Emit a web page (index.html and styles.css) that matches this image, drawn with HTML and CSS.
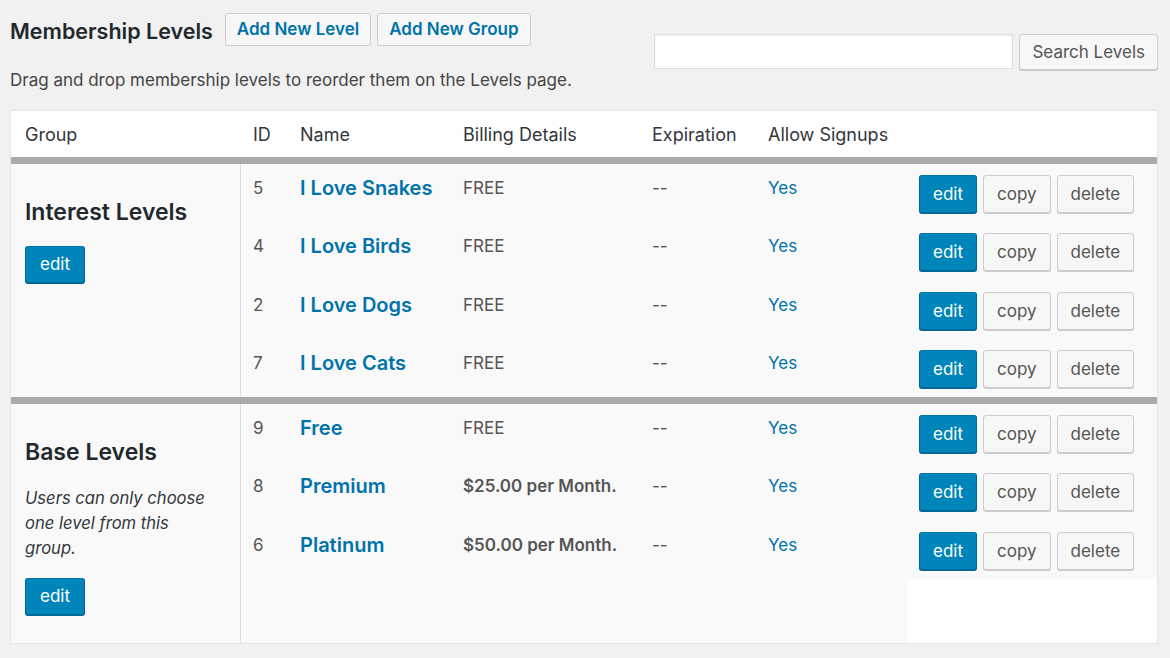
FILE: index.html
```html
<!DOCTYPE html>
<html lang="en">
<head>
    <meta charset="UTF-8">
    <meta name="viewport" content="width=device-width, initial-scale=1.0">
    <title>Membership Levels</title>
    <link rel="stylesheet" href="styles.css">
</head>
<body>
    <div class="wrap">
        <div class="top">
            <div class="top-left">
                <div class="title-row">
                    <h1>Membership Levels</h1>
                    <a href="#" class="page-btn">Add New Level</a>
                    <a href="#" class="page-btn">Add New Group</a>
                </div>
                <p class="intro">Drag and drop membership levels to reorder them on the Levels page.</p>
            </div>
            <form class="search">
                <input type="text" class="search-input">
                <button type="button" class="btn">Search Levels</button>
            </form>
        </div>

        <div class="levels">
            <div class="levels-head">
                <div class="col-group">Group</div>
                <div>ID</div>
                <div>Name</div>
                <div>Billing Details</div>
                <div>Expiration</div>
                <div>Allow Signups</div>
                <div></div>
            </div>

            <div class="group">
                <div class="group-info">
                    <h2>Interest Levels</h2>
                    <a href="#" class="btn btn-primary">edit</a>
                </div>
                <div class="group-levels">
                    <div class="level-row">
                        <div class="cell">5</div>
                        <div class="cell"><a href="#" class="level-name">I Love Snakes</a></div>
                        <div class="cell">FREE</div>
                        <div class="cell">--</div>
                        <div class="cell"><a href="#" class="yes">Yes</a></div>
                        <div class="actions">
                            <a href="#" class="btn btn-primary">edit</a>
                            <a href="#" class="btn">copy</a>
                            <a href="#" class="btn">delete</a>
                        </div>
                    </div>
                    <div class="level-row">
                        <div class="cell">4</div>
                        <div class="cell"><a href="#" class="level-name">I Love Birds</a></div>
                        <div class="cell">FREE</div>
                        <div class="cell">--</div>
                        <div class="cell"><a href="#" class="yes">Yes</a></div>
                        <div class="actions">
                            <a href="#" class="btn btn-primary">edit</a>
                            <a href="#" class="btn">copy</a>
                            <a href="#" class="btn">delete</a>
                        </div>
                    </div>
                    <div class="level-row">
                        <div class="cell">2</div>
                        <div class="cell"><a href="#" class="level-name">I Love Dogs</a></div>
                        <div class="cell">FREE</div>
                        <div class="cell">--</div>
                        <div class="cell"><a href="#" class="yes">Yes</a></div>
                        <div class="actions">
                            <a href="#" class="btn btn-primary">edit</a>
                            <a href="#" class="btn">copy</a>
                            <a href="#" class="btn">delete</a>
                        </div>
                    </div>
                    <div class="level-row">
                        <div class="cell">7</div>
                        <div class="cell"><a href="#" class="level-name">I Love Cats</a></div>
                        <div class="cell">FREE</div>
                        <div class="cell">--</div>
                        <div class="cell"><a href="#" class="yes">Yes</a></div>
                        <div class="actions">
                            <a href="#" class="btn btn-primary">edit</a>
                            <a href="#" class="btn">copy</a>
                            <a href="#" class="btn">delete</a>
                        </div>
                    </div>
                </div>
            </div>

            <div class="group">
                <div class="group-info">
                    <h2>Base Levels</h2>
                    <p class="group-desc">Users can only choose one level from this group.</p>
                    <a href="#" class="btn btn-primary">edit</a>
                </div>
                <div class="group-levels">
                    <div class="level-row">
                        <div class="cell">9</div>
                        <div class="cell"><a href="#" class="level-name">Free</a></div>
                        <div class="cell">FREE</div>
                        <div class="cell">--</div>
                        <div class="cell"><a href="#" class="yes">Yes</a></div>
                        <div class="actions">
                            <a href="#" class="btn btn-primary">edit</a>
                            <a href="#" class="btn">copy</a>
                            <a href="#" class="btn">delete</a>
                        </div>
                    </div>
                    <div class="level-row">
                        <div class="cell">8</div>
                        <div class="cell"><a href="#" class="level-name">Premium</a></div>
                        <div class="cell"><strong>$25.00 per Month.</strong></div>
                        <div class="cell">--</div>
                        <div class="cell"><a href="#" class="yes">Yes</a></div>
                        <div class="actions">
                            <a href="#" class="btn btn-primary">edit</a>
                            <a href="#" class="btn">copy</a>
                            <a href="#" class="btn">delete</a>
                        </div>
                    </div>
                    <div class="level-row">
                        <div class="cell">6</div>
                        <div class="cell"><a href="#" class="level-name">Platinum</a></div>
                        <div class="cell"><strong>$50.00 per Month.</strong></div>
                        <div class="cell">--</div>
                        <div class="cell"><a href="#" class="yes">Yes</a></div>
                        <div class="actions">
                            <a href="#" class="btn btn-primary">edit</a>
                            <a href="#" class="btn">copy</a>
                            <a href="#" class="btn">delete</a>
                        </div>
                    </div>
                    <div class="level-fill">
                        <div></div>
                        <div class="fill-blank"></div>
                    </div>
                </div>
            </div>
        </div>
    </div>
</body>
</html>
```

FILE: styles.css
```css
body {
    margin: 0;
    background: #f1f1f1;
    color: #444;
    font-family: Inter, "Liberation Sans", sans-serif;
}

a {
    text-decoration: none;
}

.wrap {
    padding: 13px 12px 0 10px;
}

.top {
    display: flex;
    justify-content: space-between;
    align-items: flex-start;
}

.title-row {
    display: flex;
    align-items: center;
    gap: 6px;
}

h1 {
    margin: 3px 6px 0 0;
    font-size: 21.5px;
    font-weight: 600;
    color: #23282d;
}

.page-btn {
    display: inline-block;
    height: 33px;
    line-height: 31px;
    padding: 0 11px;
    box-sizing: border-box;
    border: 1px solid #ccc;
    border-radius: 3px;
    background: #f7f7f7;
    color: #0073aa;
    font-size: 17px;
    font-weight: 600;
}

.intro {
    margin: 23px 0 0;
    font-size: 17px;
    line-height: 22px;
}

.search {
    display: flex;
    gap: 6px;
    margin-top: 21px;
}

.search-input {
    width: 359px;
    height: 35px;
    box-sizing: border-box;
    border: 1px solid #ddd;
    box-shadow: inset 0 1px 2px rgba(0, 0, 0, 0.07);
    background: #fff;
    margin: 0;
}

.btn {
    display: inline-block;
    height: 38px;
    line-height: 36px;
    padding: 0 13px;
    box-sizing: border-box;
    border: 1px solid #ccc;
    border-radius: 3px;
    background: #f7f7f7;
    box-shadow: 0 1px 0 #ccc;
    color: #555;
    font-family: inherit;
    font-size: 17px;
    cursor: pointer;
}

.search .btn {
    height: 36px;
    line-height: 34px;
    padding: 0 12px;
}

.btn-primary {
    background: #0085ba;
    border-color: #0073aa #006799 #006799;
    box-shadow: 0 1px 0 #006799;
    color: #fff;
}

.levels {
    margin-top: 19px;
    border: 1px solid #e5e5e5;
    background: #fff;
    box-shadow: 0 1px 1px rgba(0, 0, 0, 0.04);
}

.levels-head {
    display: grid;
    grid-template-columns: 230px 47px 163px 189px 116px 151px 1fr;
    height: 46px;
    align-items: center;
    font-size: 18px;
    color: #32373c;
}

.levels-head > div {
    padding-left: 12px;
}

.levels-head .col-group {
    padding-left: 14px;
}

.group {
    display: flex;
    border-top: 7px solid #aaa;
}

.group-info {
    width: 230px;
    flex-shrink: 0;
    box-sizing: border-box;
    padding: 34px 24px 28px 14px;
    border-right: 1px solid #ddd;
    background: #f9f9f9;
}

.group-info h2 {
    margin: 0 0 19px;
    font-size: 23px;
    font-weight: 600;
    line-height: 29px;
    color: #23282d;
}

.group-info .btn {
    height: 37px;
    line-height: 35px;
    padding: 0 14px;
}

.group-desc {
    margin: 4px 0 17px;
    font-size: 16.6px;
    font-style: italic;
    line-height: 25px;
    color: #32373c;
}

.group-levels {
    flex: 1;
    display: flex;
    flex-direction: column;
    background: #f9f9f9;
}

.level-row {
    display: grid;
    grid-template-columns: 47px 163px 189px 116px 151px 1fr;
    height: 58.3px;
    font-size: 17px;
    color: #555;
}

.cell {
    padding: 12px 0 0 12px;
    line-height: 24px;
}

.cell strong {
    font-weight: 600;
}

.level-name {
    font-size: 20px;
    font-weight: 600;
    color: #0073aa;
}

.yes {
    color: #0073aa;
}

.actions {
    display: flex;
    gap: 6px;
    padding: 11px 0 0 12px;
}

.level-fill {
    flex: 1;
    display: grid;
    grid-template-columns: 666px 1fr;
}

.fill-blank {
    background: #fff;
}
```
